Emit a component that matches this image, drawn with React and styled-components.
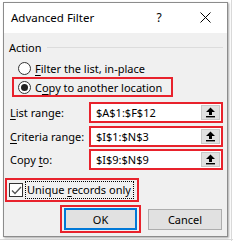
import React from "react";
import styled, { createGlobalStyle } from "styled-components";

const Global = createGlobalStyle`
  html, body { margin: 0; padding: 0; }
  body {
    width: 233px; height: 241px; overflow: hidden;
    background:
      linear-gradient(#d9d9d9, #d9d9d9) 231px 0 / 1px 100% no-repeat,
      linear-gradient(#d9d9d9, #d9d9d9) 0 239px / 100% 1px no-repeat,
      #ffffff;
    font-family: "Noto Sans", "Open Sans", "Liberation Sans", sans-serif;
    font-size: 11px;
    line-height: 15px;
    white-space: nowrap;
    color: #000;
  }
`;

const Dialog = styled.div`
  box-sizing: border-box;
  margin: 2px 0 0 3px;
  width: 225px;
  height: 235px;
  border: 1px solid #8c8c8c;
  background: #f0f0f0;
  box-shadow: 1px 1px 2px rgba(0,0,0,0.35);
  display: flex;
  flex-direction: column;
`;

const TitleBar = styled.div`
  height: 30px;
  background: #fff;
  display: flex;
  align-items: center;
  padding-left: 7px;
`;

const Title = styled.div`
  flex: 1;
  font-size: 11.5px;
  margin-top: -2px;
`;

const Help = styled.div`
  width: 12px;
  text-align: center;
  font-size: 12px;
  margin-right: 35px;
  margin-top: -2px;
`;

const Close = styled.svg`
  width: 11px;
  height: 11px;
  margin-right: 16px;
  margin-top: -2px;
`;

const Body = styled.div`
  display: flex;
  flex-direction: column;
`;

const GroupHeader = styled.div`
  margin-top: 6px;
  height: 16px;
  display: flex;
  align-items: center;
  padding-left: 5px;
  padding-right: 4px;
`;

const GroupLine = styled.div`
  flex: 1;
  height: 1px;
  background: #dcdcdc;
  margin-left: 5px;
`;

const Mark = styled.span`
  text-decoration: underline;
  text-underline-offset: 2px;
`;

const Highlight = styled.div`
  box-sizing: border-box;
  border: 2px solid #e8222c;
  display: flex;
  align-items: center;
`;

const RadioRow = styled.div`
  display: flex;
  align-items: center;
  gap: 4px;
  height: 16px;
  padding-left: ${p => p.$pad}px;
  margin-top: ${p => p.$top || 0}px;
`;

const RadioBox = styled(Highlight)`
  margin-top: 1px;
  margin-left: 8px;
  width: 161px;
  height: 20px;
  padding-left: 4px;
  gap: 4px;
`;

const RadioCircle = styled.span`
  box-sizing: border-box;
  width: 13px;
  height: 13px;
  border-radius: 50%;
  border: 1px solid #333;
  background: #fff;
  display: flex;
  align-items: center;
  justify-content: center;
  &::after {
    content: "";
    width: 7px;
    height: 7px;
    border-radius: 50%;
    background: ${p => (p.$on ? "#222" : "transparent")};
  }
`;

const FieldRow = styled.div`
  display: flex;
  align-items: center;
  margin-top: ${p => p.$top}px;
  padding-left: 6px;
`;

const FieldLabel = styled.div`
  width: 79px;
`;

const FieldBox = styled(Highlight)`
  width: 134px;
  height: 21px;
  background: #fff;
  padding-left: 5px;
  padding-right: 1px;
`;

const FieldText = styled.div`
  flex: 1;
`;

const PickButton = styled.div`
  box-sizing: border-box;
  width: 19px;
  height: 15px;
  background: #e1e1e1;
  border: 1px solid #c8c8c8;
  display: flex;
  align-items: center;
  justify-content: center;
`;

const CheckBox = styled(Highlight)`
  margin-top: 8px;
  margin-left: 1px;
  width: 134px;
  height: 24px;
  padding-left: 2px;
  gap: 3px;
`;

const Square = styled.span`
  box-sizing: border-box;
  width: 14px;
  height: 14px;
  border: 1px solid #333;
  background: #fff;
  display: flex;
  align-items: center;
  justify-content: center;
`;

const Focus = styled.span`
  outline: 1px dotted #000;
  padding: 0 2px 1px 1px;
  line-height: 15px;
`;

const ButtonRow = styled.div`
  display: flex;
  align-items: center;
  margin-top: 3px;
  padding-left: 56px;
  gap: 7px;
`;

const OkWrap = styled(Highlight)`
  width: 81px;
  height: 28px;
  justify-content: center;
`;

const Button = styled.div`
  box-sizing: border-box;
  width: ${p => p.$w}px;
  height: ${p => p.$h}px;
  background: #e1e1e1;
  border: ${p => (p.$default ? "2px solid #0078d7" : "1px solid #adadad")};
  display: flex;
  align-items: center;
  justify-content: center;
`;

const UpArrow = () => (
  <svg width="11" height="11" viewBox="0 0 11 11">
    <path d="M5.5 0.5 L10 5 L7 5 L7 8 L4 8 L4 5 L1 5 Z" fill="#000" />
    <rect x="1" y="9" width="9" height="1.4" fill="#000" />
  </svg>
);

const Field = ({ top, label, value }) => (
  <FieldRow $top={top}>
    <FieldLabel>{label}</FieldLabel>
    <FieldBox>
      <FieldText>{value}</FieldText>
      <PickButton><UpArrow /></PickButton>
    </FieldBox>
  </FieldRow>
);

export default function App() {
  return (
    <>
      <Global />
      <Dialog>
        <TitleBar>
          <Title>Advanced Filter</Title>
          <Help>?</Help>
          <Close viewBox="0 0 11 11">
            <path d="M0.5 0.5 L10.5 10.5 M10.5 0.5 L0.5 10.5" stroke="#000" strokeWidth="1" />
          </Close>
        </TitleBar>
        <Body>
          <GroupHeader>
            Action
            <GroupLine />
          </GroupHeader>
          <RadioRow $pad={14} $top={5}>
            <RadioCircle />
            <span><Mark>F</Mark>ilter the list, in-place</span>
          </RadioRow>
          <RadioBox>
            <RadioCircle $on />
            <span>C<Mark>o</Mark>py to another location</span>
          </RadioBox>
          <Field top={5} label={<><Mark>L</Mark>ist range:</>} value="$A$1:$F$12" />
          <Field top={3} label={<><Mark>C</Mark>riteria range:</>} value="$I$1:$N$3" />
          <Field top={2} label={<>Copy <Mark>t</Mark>o:</>} value="$I$9:$N$9" />
          <CheckBox>
            <Square>
              <svg width="11" height="9" viewBox="0 0 11 9">
                <path d="M1 4.5 L4 7.5 L10 1" stroke="#555" strokeWidth="1.3" fill="none" />
              </svg>
            </Square>
            <Focus>Unique <Mark>r</Mark>ecords only</Focus>
          </CheckBox>
          <ButtonRow>
            <OkWrap>
              <Button $default $w={73} $h={22}>OK</Button>
            </OkWrap>
            <Button $w={74} $h={21}>Cancel</Button>
          </ButtonRow>
        </Body>
      </Dialog>
    </>
  );
}
